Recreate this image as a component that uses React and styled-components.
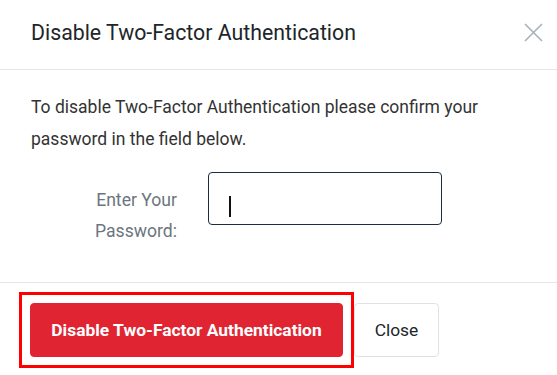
import React from 'react';
import styled, {createGlobalStyle} from 'styled-components';

const GlobalStyle = createGlobalStyle`
    html, body {
        margin: 0;
        padding: 0;
        background: #fff;
    }
    body {
        font-family: Roboto, "Liberation Sans", Arial, sans-serif;
        color: #212529;
    }
`;

const Modal = styled.div`
    width: 557px;
    height: 375px;
    background: #fff;
    overflow: hidden;
`;

const Header = styled.div`
    display: flex;
    align-items: flex-start;
    justify-content: space-between;
    height: 70px;
    padding: 18px 14px 0 31px;
    box-sizing: border-box;
    border-bottom: 1px solid #e5e7ea;
`;

const Title = styled.h5`
    margin: 0;
    font-size: 21.3px;
    font-weight: 400;
    line-height: 30px;
    color: #212529;
`;

const CloseIcon = styled.button`
    border: 0;
    background: transparent;
    padding: 0;
    margin-top: 5px;
    width: 19px;
    height: 19px;
    cursor: pointer;
    svg {
        display: block;
    }
`;

const Body = styled.div`
    padding: 21px 30px 0 31px;
    height: 213px;
    box-sizing: border-box;
    border-bottom: 1px solid #e5e7ea;
`;

const Text = styled.p`
    margin: 0 0 17px;
    font-size: 17.5px;
    line-height: 32px;
    color: #333;
`;

const FieldRow = styled.div`
    display: grid;
    grid-template-columns: 146px 234px;
    column-gap: 31px;
    align-items: start;
`;

const Label = styled.label`
    padding-top: 13px;
    text-align: right;
    font-size: 17.6px;
    line-height: 31px;
    color: #6c757d;
`;

const InputWrap = styled.div`
    position: relative;
`;

const Input = styled.input`
    display: block;
    width: 234px;
    height: 53px;
    box-sizing: border-box;
    border: 1px solid #1e2b45;
    border-radius: 4px;
    padding: 0 20px;
    font-size: 17px;
    font-family: inherit;
    outline: none;
    caret-color: transparent;
`;

const Caret = styled.span`
    position: absolute;
    left: 21px;
    top: 24px;
    width: 2px;
    height: 21px;
    background: #111;
`;

const Footer = styled.div`
    display: flex;
    align-items: center;
    padding: 9px 19px 0;
`;

const Highlight = styled.div`
    display: flex;
    padding: 8px;
    border: 3px solid #ff0000;
`;

const Button = styled.button`
    height: 54px;
    box-sizing: border-box;
    border-radius: 4px;
    font-family: inherit;
    cursor: pointer;
    padding: 0;
    border: 1px solid ${p => p.danger ? '#e02432' : '#dee2e6'};
    background: ${p => p.danger ? '#e02432' : '#fff'};
    color: ${p => p.danger ? '#fff' : '#212529'};
    font-size: 17.4px;
    font-weight: ${p => p.danger ? 700 : 400};
    width: ${p => p.danger ? '313px' : '85px'};
`;

export default function App() {
    return (
        <>
            <GlobalStyle/>
            <Modal>
                <Header>
                    <Title>Disable Two-Factor Authentication</Title>
                    <CloseIcon aria-label="Close">
                        <svg width="19" height="19" viewBox="0 0 19 19">
                            <path d="M1 1 L18 18 M18 1 L1 18" stroke="#a9b0b9" strokeWidth="1.6" fill="none"/>
                        </svg>
                    </CloseIcon>
                </Header>
                <Body>
                    <Text>
                        To disable Two-Factor Authentication please confirm your password in the field below.
                    </Text>
                    <FieldRow>
                        <Label htmlFor="pw">Enter Your Password:</Label>
                        <InputWrap>
                            <Input id="pw" type="password"/>
                            <Caret/>
                        </InputWrap>
                    </FieldRow>
                </Body>
                <Footer>
                    <Highlight>
                        <Button danger>Disable Two-Factor Authentication</Button>
                    </Highlight>
                    <Button>Close</Button>
                </Footer>
            </Modal>
        </>
    );
}
